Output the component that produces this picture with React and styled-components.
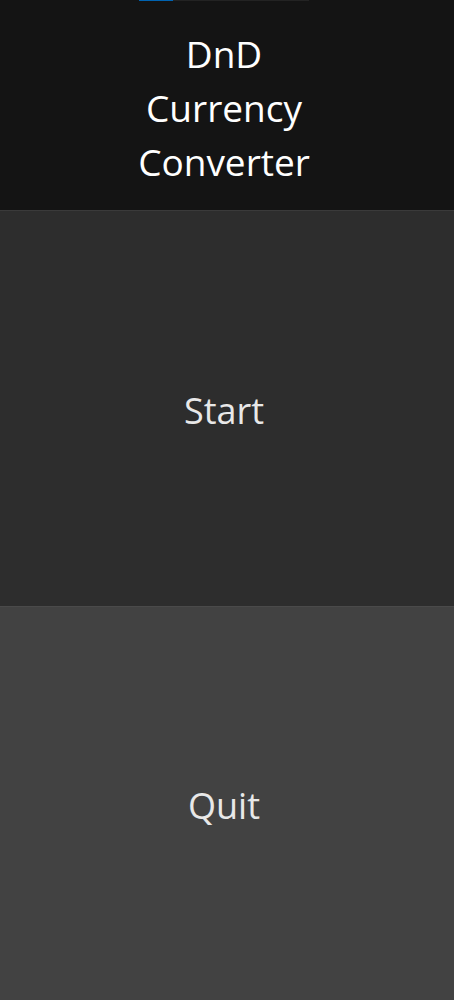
import styled, { createGlobalStyle } from "styled-components";

const GlobalStyle = createGlobalStyle`
  html, body {
    margin: 0;
    padding: 0;
    height: 100%;
    background: #141414;
  }
  #root {
    height: 100%;
  }
`;

const Page = styled.div`
  display: flex;
  flex-direction: column;
  height: 1000px;
  font-family: "Open Sans", "Noto Sans", sans-serif;
`;

const Header = styled.header`
  position: relative;
  height: 210px;
  background: #141414;
  display: flex;
  align-items: center;
  justify-content: center;
  box-sizing: border-box;
  padding: 6px 6px 0 0;
`;

const ProgressTrack = styled.div`
  position: absolute;
  top: 0;
  left: 139px;
  width: 170px;
  height: 1px;
  background: #232323;
`;

const ProgressFill = styled.div`
  height: 100%;
  background: #0063b1;
`;

const Title = styled.h1`
  margin: 0;
  color: #ffffff;
  font-size: 37px;
  font-weight: 400;
  line-height: 54px;
  text-align: center;
  width: 200px;
`;

const MenuButton = styled.button`
  flex: ${(p) => p.$grow};
  border: none;
  border-top: 1px solid ${(p) => p.$edge};
  background: ${(p) => p.$bg};
  color: #e8e8e8;
  font-family: inherit;
  font-size: 36px;
  font-weight: 400;
  display: flex;
  align-items: center;
  justify-content: center;
  padding: 4px 6px 0 0;
  cursor: pointer;
`;

export default function App() {
  return (
    <>
      <GlobalStyle />
      <Page>
        <Header>
          <ProgressTrack>
            <ProgressFill style={{ width: "20%" }} />
          </ProgressTrack>
          <Title>DnD Currency Converter</Title>
        </Header>
        <MenuButton $grow={396} $bg="#2d2d2d" $edge="#3a3a3a">
          Start
        </MenuButton>
        <MenuButton $grow={394} $bg="#424242" $edge="#4a4a4a">
          Quit
        </MenuButton>
      </Page>
    </>
  );
}
